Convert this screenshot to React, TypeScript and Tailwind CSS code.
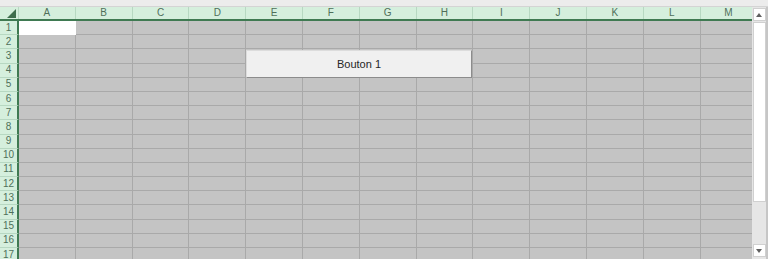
import React from "react";

const cols = ["A", "B", "C", "D", "E", "F", "G", "H", "I", "J", "K", "L", "M"];
const rows = Array.from({ length: 17 }, (_, i) => i + 1);

export default function App() {
  return (
    <div
      className="w-[768px] h-[259px] overflow-hidden flex flex-col bg-[#e6e6e6] select-none"
      style={{ fontFamily: '"Liberation Sans", Arial, sans-serif' }}
    >
      {/* ribbon edge */}
      <div className="h-[7px] shrink-0 bg-[#ececec] border-b border-[#d4d4d4]" />

      <div className="flex flex-1 min-h-0">
        {/* sheet */}
        <div className="relative flex-1 min-w-0 overflow-hidden flex flex-col">
          {/* column headers */}
          <div className="flex h-[14px] shrink-0 bg-[#d5efdd] border-b-2 border-[#3f7a52]">
            <div className="w-[19px] shrink-0 relative border-r border-[#b7d8c2]">
              <svg className="absolute right-[2px] bottom-[1px]" width="9" height="9" viewBox="0 0 9 9">
                <polygon points="9,0 9,9 0,9" fill="#3f6e4d" />
              </svg>
            </div>
            {cols.map((c) => (
              <div
                key={c}
                className="w-[56.8px] shrink-0 border-r border-[#b7d8c2] flex items-center justify-center text-[10px] leading-none text-[#4f6f5a]"
              >
                {c}
              </div>
            ))}
          </div>

          {/* rows */}
          {rows.map((r) => (
            <div key={r} className="flex h-[14.2px] shrink-0">
              <div className="w-[19px] shrink-0 bg-[#d5efdd] border-r-2 border-[#3f7a52] border-b border-b-[#b7d8c2] flex items-center justify-center text-[10px] leading-none text-[#4f6f5a]">
                {r}
              </div>
              {cols.map((c) => (
                <div
                  key={c}
                  className={
                    r === 1 && c === "A"
                      ? "w-[56.8px] shrink-0 bg-white border-r border-b border-white"
                      : "w-[56.8px] shrink-0 bg-[#c4c4c4] border-r border-b border-[#a9a9a9]"
                  }
                />
              ))}
            </div>
          ))}

          {/* form button */}
          <div className="absolute left-[246px] top-[43px] w-[226px] h-[28px] bg-[#f0f0f0] border border-[#dcdcdc] border-r-[#8c8c8c] border-b-[#8c8c8c] flex items-center justify-center text-[11px] text-[#262626]">
            Bouton 1
          </div>
        </div>

        {/* vertical scrollbar */}
        <div className="w-[14px] shrink-0 bg-[#e6e6e6] flex flex-col items-center pt-[1px] pb-[2px]">
          <div className="w-[13px] h-[13px] bg-white border border-[#d0d0d0] flex items-center justify-center">
            <svg width="6" height="4" viewBox="0 0 6 4">
              <polygon points="3,0 6,4 0,4" fill="#606060" />
            </svg>
          </div>
          <div className="w-[13px] h-[180px] mt-[1px] bg-white border border-[#d0d0d0]" />
          <div className="flex-1" />
          <div className="w-[13px] h-[13px] bg-white border border-[#d0d0d0] flex items-center justify-center">
            <svg width="6" height="4" viewBox="0 0 6 4">
              <polygon points="0,0 6,0 3,4" fill="#606060" />
            </svg>
          </div>
        </div>
        <div className="w-[2px] shrink-0 bg-[#c6c6c6]" />
      </div>
    </div>
  );
}
